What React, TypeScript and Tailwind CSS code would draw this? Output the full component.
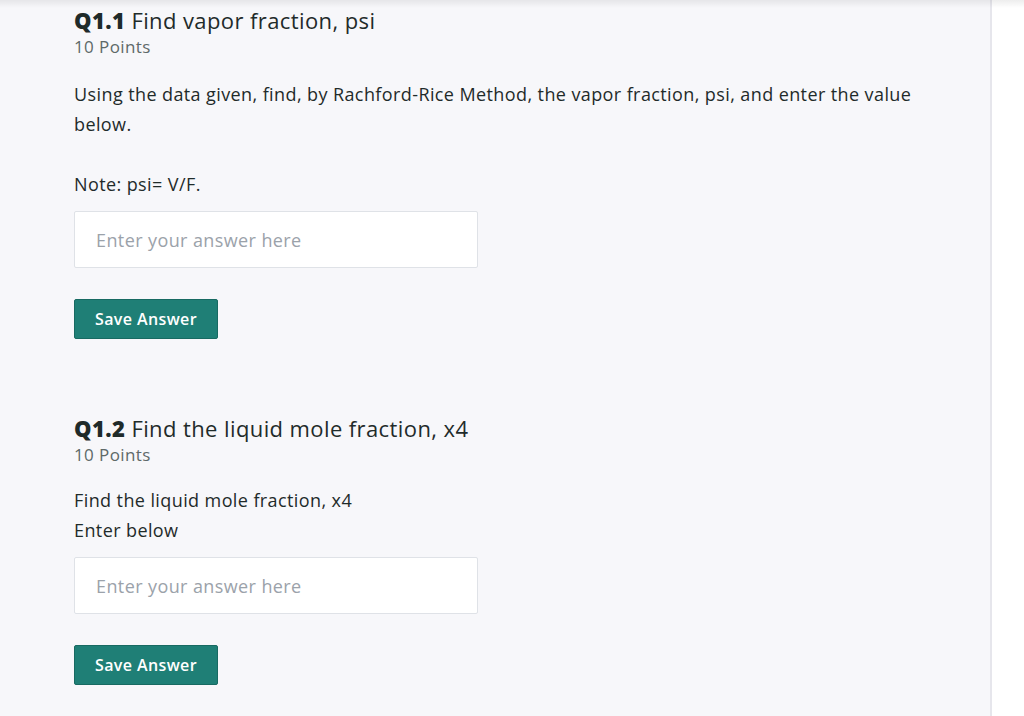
export default function App() {
  const questions = [
    {
      num: 'Q1.1',
      title: 'Find vapor fraction, psi',
      body: (
        <>
          <p className="mt-[19px] max-w-[860px] leading-[30px]">
            Using the data given, find, by Rachford-Rice Method, the vapor fraction, psi, and enter the value below.
          </p>
          <p className="mt-[30px] leading-[30px]">Note: psi= V/F.</p>
        </>
      ),
    },
    {
      num: 'Q1.2',
      title: 'Find the liquid mole fraction, x4',
      body: (
        <div className="mt-[17px] leading-[30px]">
          <p>Find the liquid mole fraction, x4</p>
          <p>Enter below</p>
        </div>
      ),
    },
  ]

  return (
    <div
      className="relative flex h-[716px] w-full overflow-hidden bg-white text-[#1f2b2a] tracking-[0.4px]"
      style={{ fontFamily: '"Open Sans", Arial, sans-serif' }}
    >
      {/* top shadow */}
      <div className="pointer-events-none absolute inset-x-0 top-0 h-[8px] bg-gradient-to-b from-black/[0.07] to-transparent" />

      <div className="w-[992px] shrink-0 border-r-2 border-[#e6e6ec] bg-[#f7f7fa] pl-[74px] pt-[6px] text-[18px]">
        {questions.map((q, i) => (
          <section key={q.num} className={i === 0 ? '' : 'mt-[75px]'}>
            <h2 className="text-[22px] leading-[28px]">
              <span className="font-extrabold">{q.num}</span> {q.title}
            </h2>
            <div className="text-[17px] leading-[26px] text-[#5e6968]">10 Points</div>
            {q.body}
            <input
              type="text"
              placeholder="Enter your answer here"
              className="mt-[12px] block h-[57px] w-[404px] rounded-[2px] border border-[#dfe2e7] bg-white px-[21px] text-[18px] tracking-[0.4px] text-[#1f2b2a] outline-none placeholder:text-[#9ba2aa]"
            />
            <button className="mt-[31px] block h-[40px] w-[144px] rounded-[2px] border border-[#186a62] bg-[#1f7f76] text-[16px] font-semibold tracking-[0.4px] text-white">
              Save Answer
            </button>
          </section>
        ))}
      </div>
    </div>
  )
}
